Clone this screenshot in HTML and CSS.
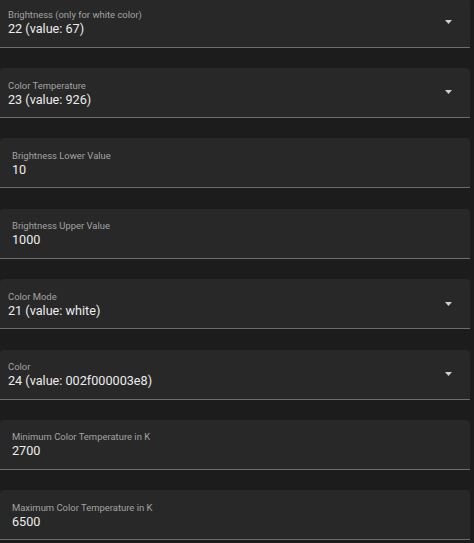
FILE: index.html
```html
<!DOCTYPE html>
<html>
<head>
<meta charset="utf-8">
<link rel="stylesheet" href="styles.css">
</head>
<body>
<div class="list">
  <div class="field select">
    <div class="text"><div class="label">Brightness (only for white color)</div><div class="value">22 (value: 67)</div></div>
    <svg class="arrow" width="7" height="4" viewBox="0 0 7 4"><polygon points="0,0 7,0 3.5,4"/></svg>
  </div>
  <div class="field select">
    <div class="text"><div class="label">Color Temperature</div><div class="value">23 (value: 926)</div></div>
    <svg class="arrow" width="7" height="4" viewBox="0 0 7 4"><polygon points="0,0 7,0 3.5,4"/></svg>
  </div>
  <div class="field input">
    <div class="text"><div class="label">Brightness Lower Value</div><div class="value">10</div></div>
  </div>
  <div class="field input">
    <div class="text"><div class="label">Brightness Upper Value</div><div class="value">1000</div></div>
  </div>
  <div class="field select">
    <div class="text"><div class="label">Color Mode</div><div class="value">21 (value: white)</div></div>
    <svg class="arrow" width="7" height="4" viewBox="0 0 7 4"><polygon points="0,0 7,0 3.5,4"/></svg>
  </div>
  <div class="field select">
    <div class="text"><div class="label">Color</div><div class="value">24 (value: 002f000003e8)</div></div>
    <svg class="arrow" width="7" height="4" viewBox="0 0 7 4"><polygon points="0,0 7,0 3.5,4"/></svg>
  </div>
  <div class="field input">
    <div class="text"><div class="label">Minimum Color Temperature in K</div><div class="value">2700</div></div>
  </div>
  <div class="field input">
    <div class="text"><div class="label">Maximum Color Temperature in K</div><div class="value">6500</div></div>
  </div>
</div>
</body>
</html>
```

FILE: styles.css
```css
html, body {
  margin: 0;
  padding: 0;
  background: #1c1c1c;
  overflow: hidden;
}
body {
  font-family: Roboto, "Liberation Sans", sans-serif;
}
.list {
  width: 469.5px;
  margin-top: -2.4px;
  display: flex;
  flex-direction: column;
  gap: 20.4px;
}
.field {
  box-sizing: border-box;
  height: 50px;
  background: #282828;
  border-bottom: 1.5px solid #6c6c6c;
  border-radius: 4px 4px 0 0;
  display: flex;
  align-items: flex-start;
  padding-top: 11.5px;
}
.field.select { padding-left: 8px; }
.field.input { padding-left: 12px; }
.text {
  flex: 1;
  display: flex;
  flex-direction: column;
}
.label {
  font-size: 9.45px;
  line-height: 12px;
  color: #a3a3a3;
}
.value {
  font-size: 12.65px;
  line-height: 16px;
  color: #ececec;
}
.arrow {
  margin-top: 10.9px;
  margin-right: 17.5px;
  fill: #cfcfcf;
}
```
